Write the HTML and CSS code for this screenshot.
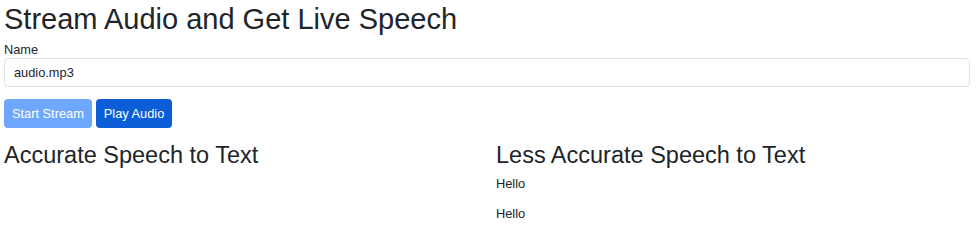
FILE: index.html
```html
<!DOCTYPE html>
<html lang="en">

<head>
    <meta charset="UTF-8">
    <meta name="viewport" content="width=device-width, initial-scale=1.0">
    <title>Stream Audio</title>
    <link rel="stylesheet" href="styles.css">
</head>

<body>
    <div class="container">
        <h1>Stream Audio and Get Live Speech</h1>
        <div class="field">
            <label for="name">Name</label>
            <input type="text" id="name" class="form-control" value="audio.mp3">
        </div>
        <div class="actions">
            <button class="btn btn-light" disabled>Start Stream</button>
            <button class="btn btn-primary">Play Audio</button>
        </div>
        <div class="columns">
            <div class="col">
                <h2>Accurate Speech to Text</h2>
            </div>
            <div class="col">
                <h2>Less Accurate Speech to Text</h2>
                <p>Hello</p>
                <p>Hello</p>
            </div>
        </div>
    </div>
</body>

</html>
```

FILE: styles.css
```css
body {
    margin: 0;
    font-family: 'Liberation Sans', Arial, sans-serif;
    font-size: 12.8px;
    color: #212529;
    background-color: #fff;
}

.container {
    padding: 0 10px 0 4px;
}

h1 {
    font-size: 29px;
    font-weight: 500;
    margin: 0 0 5px;
    padding-top: 2px;
    line-height: 1.2;
}

h2 {
    font-size: 23.5px;
    font-weight: 500;
    margin: 0 0 7px;
    line-height: 1.2;
}

label {
    display: block;
    margin-bottom: 1px;
}

.form-control {
    display: block;
    box-sizing: border-box;
    width: 100%;
    height: 29px;
    padding: 4px 9px;
    font-family: inherit;
    font-size: 12.8px;
    color: #212529;
    border: 1px solid #dee2e6;
    border-radius: 4px;
}

.actions {
    display: flex;
    gap: 4px;
    margin: 12px 0 13px;
}

.btn {
    height: 29px;
    padding: 0 8px;
    font-family: inherit;
    font-size: 12.8px;
    color: #fff;
    border: none;
    border-radius: 4px;
}

.btn-light {
    background-color: #6ea8fe;
}

.btn-primary {
    background-color: #0b5ed7;
}

.columns {
    display: grid;
    grid-template-columns: 492px 1fr;
}

p {
    margin: 0 0 15px;
}
```
